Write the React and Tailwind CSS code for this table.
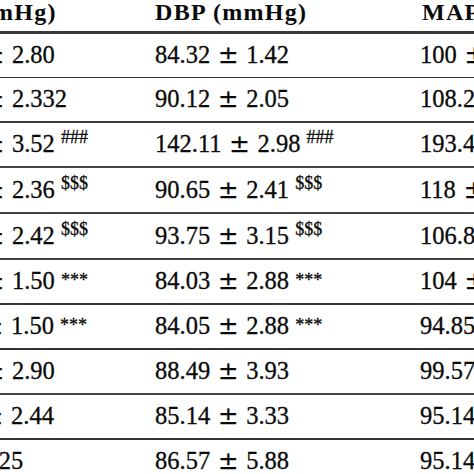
import React from 'react';

const rows = [
  { a: ['128.35', '2.80', ''], b: ['84.32', '1.42', ''], c: ['100', '1.95'], h: 'h-[43px]', line: 'h-px bg-[#333]' },
  { a: ['144.36', '2.332', ''], b: ['90.12', '2.05', ''], c: ['108.20', '2.11'], h: 'h-[43px]', line: 'h-[2px] bg-[#3a3a3a]' },
  { a: ['296.19', '3.52', '###'], b: ['142.11', '2.98', '###'], c: ['193.47', '3.12'], h: 'h-[43px]', line: 'h-[2px] bg-[#444]' },
  { a: ['172.71', '2.36', '$$$'], b: ['90.65', '2.41', '$$$'], c: ['118', '2.05'], h: 'h-[44px]', line: 'h-[2px] bg-[#444]' },
  { a: ['133.03', '2.42', '$$$'], b: ['93.75', '3.15', '$$$'], c: ['106.84', '2.61'], h: 'h-[44px]', line: 'h-[2px] bg-[#444]' },
  { a: ['143.95', '1.50', '***'], b: ['84.03', '2.88', '***'], c: ['104', '1.98'], h: 'h-[43px]', line: 'h-[2px] bg-[#3a3a3a]' },
  { a: ['116.44', '1.50', '***'], b: ['84.05', '2.88', '***'], c: ['94.85', '2.04'], h: 'h-[43px]', line: 'h-[2px] bg-[#333]' },
  { a: ['121.73', '2.90', ''], b: ['88.49', '3.93', ''], c: ['99.57', '3.08'], h: 'h-[43px]', line: 'h-[2px] bg-[#444]' },
  { a: ['115.14', '2.44', ''], b: ['85.14', '3.33', ''], c: ['95.14', '2.71'], h: 'h-[43px]', line: 'h-[2px] bg-[#333]' },
  { a: ['112', '1.25', ''], b: ['86.57', '5.88', ''], c: ['95.14', '3.40'], h: 'h-[43px]', line: '' }
];

const Pm = () => <span className="font-['DejaVu_Serif']"> ± </span>;

const Sup = ({ mark }) => {
  if (!mark) return null;
  const lift = mark === '***' ? 'top-[-3px]' : 'top-[-9px]';
  return (
    <>
      {' '}
      <span className={`relative ${lift} text-[18px]`}>{mark}</span>
    </>
  );
};

const Cell = ({ width, value }) => (
  <div className={`${width} shrink-0 whitespace-pre`}>
    {value[0]}
    <Pm />
    {value[1]}
    <Sup mark={value[2]} />
  </div>
);

export default function App() {
  return (
    <div className="w-[474px] h-[474px] overflow-hidden bg-white text-[#0a0a0a] font-['Liberation_Serif',serif]">
      <div className="ml-[-91.5px] w-[700px] flex flex-col">
        <div className="h-[31px] flex text-[24px] leading-[24px] font-bold tracking-[1.3px] whitespace-pre">
          <div className="w-[246.5px] shrink-0">SBP (mmHg)</div>
          <div className="w-[265px] shrink-0">DBP (mmHg)</div>
          <div className="pl-[2px]">MAP (mmHg)</div>
        </div>
        <div className="h-[3px] bg-[#3a3a3a]" />
        {rows.map((r, i) => (
          <React.Fragment key={i}>
            <div className={`${r.h} flex items-center text-[24.5px] leading-none [-webkit-text-stroke:0.3px]`}>
              <Cell width="w-[246.5px]" value={r.a} />
              <Cell width="w-[265px]" value={r.b} />
              <Cell width="w-[200px]" value={r.c} />
            </div>
            {r.line && <div className={r.line} />}
          </React.Fragment>
        ))}
      </div>
    </div>
  );
}
